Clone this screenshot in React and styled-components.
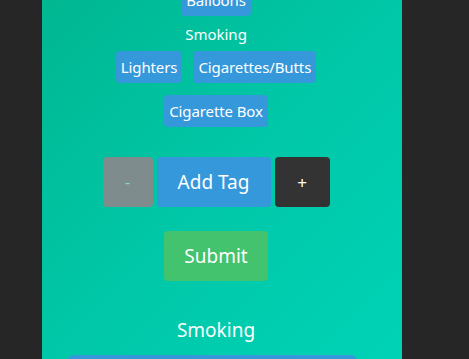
import React from "react";
import styled, { createGlobalStyle } from "styled-components";

const GlobalStyle = createGlobalStyle`
  html, body {
    margin: 0;
    padding: 0;
    background: #262626;
    overflow: hidden;
  }
  body {
    font-family: "Noto Sans", "Open Sans", sans-serif;
  }
`;

const Page = styled.div`
  height: 359px;
  overflow: hidden;
`;

const Panel = styled.div`
  width: 360px;
  margin-left: 42px;
  margin-top: -16px;
  padding-right: 12px;
  box-sizing: border-box;
  min-height: 420px;
  background: linear-gradient(135deg, #00b690 0%, #00c8a8 50%, #00d4b8 100%);
  display: flex;
  flex-direction: column;
  align-items: center;
`;

const Label = styled.div`
  color: #ffffff;
  font-size: ${(p) => p.size || 15}px;
  line-height: ${(p) => p.lh || 22}px;
  margin-top: ${(p) => p.mt || 0}px;
  text-align: center;
`;

const TagWrap = styled.div`
  display: flex;
  flex-wrap: wrap;
  justify-content: center;
  gap: 12px 11px;
  width: 260px;
  margin-top: ${(p) => p.mt || 0}px;
`;

const Tag = styled.button`
  height: 32px;
  padding: 0 5px;
  border: none;
  border-radius: 4px;
  background: #3498db;
  color: #ffffff;
  font-family: inherit;
  font-size: 15px;
  letter-spacing: -0.1px;
`;

const ActionRow = styled.div`
  display: flex;
  gap: 4px;
  margin-top: ${(p) => p.mt || 30}px;
`;

const ActionButton = styled.button`
  height: 50px;
  width: ${(p) => p.w}px;
  border: none;
  border-radius: 4px;
  background: ${(p) => p.bg};
  color: ${(p) => p.fg || "#ffffff"};
  font-family: inherit;
  font-size: ${(p) => p.fs || 19}px;
  padding: 0;
`;

const Bar = styled.div`
  align-self: flex-start;
  margin-left: 26px;
  margin-top: 12px;
  width: 289px;
  height: 40px;
  background: #3498db;
  border-radius: 6px 6px 0 0;
`;

export default function App() {
  return (
    <Page>
      <GlobalStyle />
      <Panel>
        <TagWrap>
          <Tag>Balloons</Tag>
        </TagWrap>
        <Label mt={7}>Smoking</Label>
        <TagWrap mt={6}>
          <Tag>Lighters</Tag>
          <Tag>Cigarettes/Butts</Tag>
          <Tag>Cigarette Box</Tag>
        </TagWrap>
        <ActionRow mt={30}>
          <ActionButton w={50} bg="#7f8c8d" fg="#8fd6c4" fs={16}>-</ActionButton>
          <ActionButton w={114} bg="#3498db">Add Tag</ActionButton>
          <ActionButton w={55} bg="#333333" fs={17}>+</ActionButton>
        </ActionRow>
        <ActionRow mt={24}>
          <ActionButton w={104} bg="#43c36d">Submit</ActionButton>
        </ActionRow>
        <Label size={19} lh={26} mt={36}>Smoking</Label>
        <Bar />
      </Panel>
    </Page>
  );
}
